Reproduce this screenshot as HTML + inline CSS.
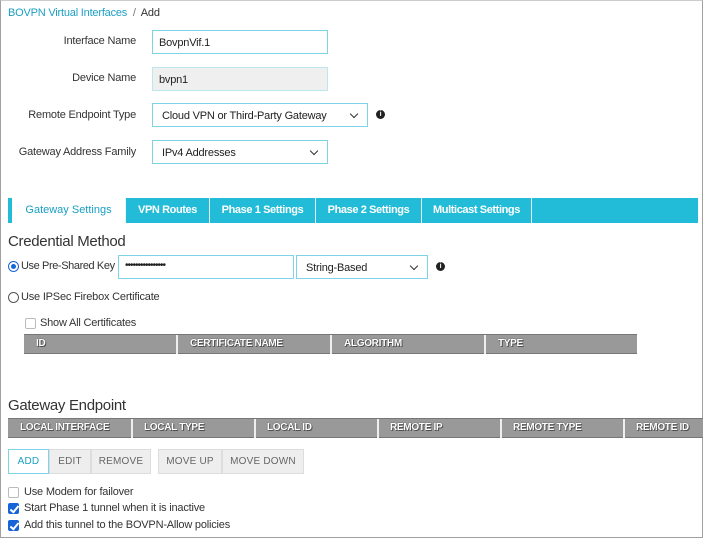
<!DOCTYPE html><html><head><style>
*{box-sizing:border-box;margin:0;padding:0}
body{width:703px;height:538px;position:relative;overflow:hidden;background:#fff;font-family:"Liberation Sans",sans-serif;font-size:11px;color:#333;letter-spacing:-0.2px}
.f{position:absolute;left:0;top:0;width:703px;height:538px;border:1px solid #a0a0a0;border-top-color:#ccc}
.a{position:absolute;white-space:nowrap}
.lbl{position:absolute;right:567px;font-size:11px;color:#333}
.in{position:absolute;border:1px solid #7fd3e6;background:#fff;height:24px;padding:6px 6px;font-size:11px;color:#222}
.sel::after{content:"";position:absolute;right:10px;top:7px;width:5px;height:5px;border-right:1.5px solid #333;border-bottom:1.5px solid #333;transform:rotate(45deg)}
.info{position:absolute;width:9px;height:9px;border-radius:50%;background:#222;color:#fff;font-size:7px;font-weight:bold;text-align:center;line-height:9px}
.tabs{position:absolute;left:8px;top:198px;width:690px;height:25px;background:#22bcd8}
.tab{position:absolute;top:0;height:25px;color:#fff;font-weight:bold;font-size:11px;letter-spacing:-0.4px;text-align:center;line-height:25px;border-right:1px solid #e6f7fb}
.th{position:absolute;background:#999;height:20px;border-top:1px solid #777;border-bottom:1px solid #777}
.th span{position:absolute;top:3px;color:#fff;font-weight:bold;font-size:10px;letter-spacing:-0.3px;text-shadow:0 0 1px #333,1px 1px 0 #555}
.th i{position:absolute;top:0;width:2px;height:19px;background:#eee}
h2{position:absolute;font-weight:normal;font-size:15px;color:#333;letter-spacing:-0.3px}
.btn{position:absolute;top:449px;height:25px;background:#eee;border:1px solid #ddd;color:#666;font-size:10px;text-align:center;line-height:23px;letter-spacing:.2px}
.cb{position:absolute;width:11px;height:11px;border:1px solid #bbb;border-radius:2px;background:#fff}
.cb.on{background:#1565d8;border-color:#1565d8}
.cb.on::after{content:"";position:absolute;left:3px;top:0;width:3px;height:7px;border-right:2px solid #fff;border-bottom:2px solid #fff;transform:rotate(40deg)}
.rd{position:absolute;width:11px;height:11px;border:1px solid #555;border-radius:50%;background:#fff}
</style></head><body>
<div class="f"></div>
<div class="a" style="left:8px;top:7px;color:#1a9fc4">BOVPN Virtual Interfaces <span style="color:#777">&nbsp;/&nbsp;</span> <span style="color:#333">Add</span></div>
<div class="lbl" style="top:35px">Interface Name</div>
<div class="in" style="left:152px;top:30px;width:176px">BovpnVif.1</div>
<div class="lbl" style="top:72px">Device Name</div>
<div class="in" style="left:152px;top:67px;width:176px;background:#efefef;border-color:#bde6ef">bvpn1</div>
<div class="lbl" style="top:109px">Remote Endpoint Type</div>
<div class="in sel" style="left:152px;top:103px;width:216px;padding-left:9px">Cloud VPN or Third-Party Gateway</div>
<div class="info" style="left:376px;top:110px">i</div>
<div class="lbl" style="top:146px">Gateway Address Family</div>
<div class="in sel" style="left:152px;top:140px;width:176px;padding-left:9px">IPv4 Addresses</div>
<div class="tabs">
<div class="tab" style="left:4px;width:114px;background:#fff;color:#1a9fc4;font-weight:normal;top:-1px;height:26px;line-height:27px;letter-spacing:0">Gateway Settings</div>
<div class="tab" style="left:118px;width:84px">VPN Routes</div>
<div class="tab" style="left:202px;width:106px">Phase 1 Settings</div>
<div class="tab" style="left:308px;width:106px">Phase 2 Settings</div>
<div class="tab" style="left:414px;width:110px">Multicast Settings</div>
</div>
<h2 style="left:8px;top:233px">Credential Method</h2>
<div class="rd" style="left:8px;top:261px;border-color:#1565d8"><div style="position:absolute;left:2px;top:2px;width:5px;height:5px;border-radius:50%;background:#1565d8"></div></div>
<div class="a" style="left:21px;top:260px;letter-spacing:-0.4px">Use Pre-Shared Key</div>
<div class="in" style="left:118px;top:255px;width:176px;padding-top:4px;font-size:10px;letter-spacing:-1px">••••••••••••••••</div>
<div class="in sel" style="left:296px;top:255px;width:132px;padding-left:9px">String-Based</div>
<div class="info" style="left:436px;top:262px">i</div>
<div class="rd" style="left:8px;top:292px"></div>
<div class="a" style="left:21px;top:291px">Use IPSec Firebox Certificate</div>
<div class="cb" style="left:25px;top:318px"></div>
<div class="a" style="left:40px;top:317px">Show All Certificates</div>
<div class="th" style="left:24px;top:334px;width:613px">
<span style="left:12px">ID</span><i style="left:152px"></i><span style="left:166px">CERTIFICATE NAME</span><i style="left:306px"></i><span style="left:320px">ALGORITHM</span><i style="left:460px"></i><span style="left:474px">TYPE</span></div>
<h2 style="left:8px;top:397px">Gateway Endpoint</h2>
<div class="th" style="left:8px;top:418px;width:695px">
<span style="left:12px">LOCAL INTERFACE</span><i style="left:123px"></i><span style="left:136px">LOCAL TYPE</span><i style="left:246px"></i><span style="left:259px">LOCAL ID</span><i style="left:369px"></i><span style="left:382px">REMOTE IP</span><i style="left:492px"></i><span style="left:505px">REMOTE TYPE</span><i style="left:615px"></i><span style="left:628px">REMOTE ID</span></div>
<div class="btn" style="left:8px;width:41px;background:#fff;border-color:#7fd3e6;color:#1a9fc4">ADD</div>
<div class="btn" style="left:49px;width:42px">EDIT</div>
<div class="btn" style="left:91px;width:60px">REMOVE</div>
<div class="btn" style="left:158px;width:64px">MOVE UP</div>
<div class="btn" style="left:222px;width:82px">MOVE DOWN</div>
<div class="cb" style="left:8px;top:487px"></div>
<div class="a" style="left:24px;top:486px">Use Modem for failover</div>
<div class="cb on" style="left:8px;top:503px"></div>
<div class="a" style="left:24px;top:502px">Start Phase 1 tunnel when it is inactive</div>
<div class="cb on" style="left:8px;top:520px"></div>
<div class="a" style="left:24px;top:519px">Add this tunnel to the BOVPN-Allow policies</div>
</body></html>
